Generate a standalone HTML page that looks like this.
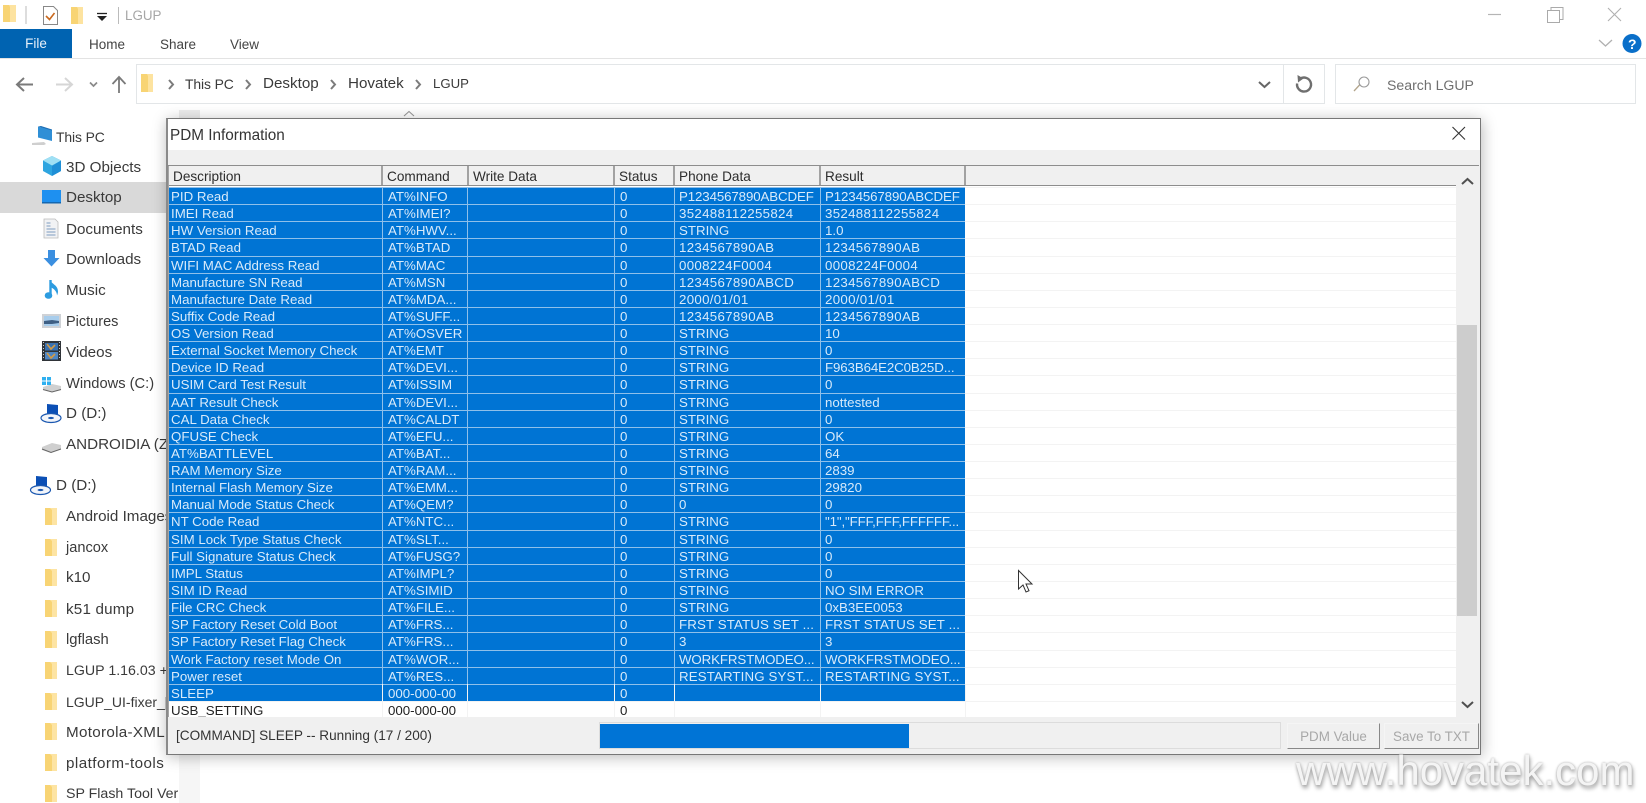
<!DOCTYPE html>
<html><head><meta charset="utf-8"><title>LGUP</title>
<style>
html,body{margin:0;padding:0;background:#fff}
body{width:1646px;height:803px;overflow:hidden;position:relative;font-family:"Liberation Sans",sans-serif;color:#333}
#root{position:absolute;left:0;top:0;width:1646px;height:803px;overflow:hidden;filter:blur(.35px)}
.a{position:absolute;white-space:nowrap}
.n{font-size:15.2px;line-height:20px;color:#3a3a3a}
svg{position:absolute;overflow:visible}
#dlg{left:166px;top:118px;width:1315px;height:637px;background:#f0f0f0;box-sizing:border-box;border:1px solid #777;border-left:2px solid #8a8a8a;box-shadow:1px 2px 14px rgba(0,0,0,.28)}
.r{position:absolute;left:169px;width:1287px;height:18px;box-sizing:border-box;border-top:1px solid #f3f3f3;background:#fff;font-size:13.3px;line-height:17px}
.r div{position:absolute;top:0;white-space:nowrap;height:17px}
.b::before{content:"";position:absolute;left:0;top:-1px;width:796px;height:18px;background:#0074d4;border-top:1px solid #8fc0ea;box-sizing:border-box}
.b{color:#d8eafa}
.k{color:#222}
.r div:nth-child(1){left:2px}
.r div:nth-child(2){left:219px}
.r div:nth-child(3){left:451px}
.r div:nth-child(4){left:510px}
.r div:nth-child(5){left:656px}
.d{letter-spacing:.3px}
.t{letter-spacing:-.12px}
.w{letter-spacing:.12px}
.cl{position:absolute;width:1px;top:187px;height:497px;background:#8fc0ea}
.cw{position:absolute;width:1px;top:684px;height:33px;background:#f3f3f3}
.h{position:absolute;top:168px;font-size:13.6px;line-height:18px;color:#2c2c2c;white-space:nowrap}
.hs{position:absolute;top:166px;width:2px;height:19px;background:#a2a2a2}
</style></head><body><div id="root">

<!-- title bar -->
<svg style="left:0;top:0" width="140" height="30">
<path d="M3 5h13v17H3z" fill="#fde3a0"/><path d="M3 5h6l1 2v15H3z" fill="#f8d474"/>
<path d="M26 6v18" stroke="#bbb"/>
<path d="M43.500 6.500h10l4 4v14h-14z" fill="#fff" stroke="#888"/><path d="M46 16l3.500 3.500 5-6.500" fill="none" stroke="#c9691e" stroke-width="1.600"/>
<path d="M71 7h12v17H71z" fill="#fde3a0"/><path d="M71 7h6l1 2v15h-7z" fill="#f8d474"/>
<path d="M97 13.500h10" stroke="#222" stroke-width="1.300"/><path d="M97 16h10l-5 5z" fill="#222"/>
<path d="M118.500 7v17" stroke="#bbb"/>
</svg>
<div class="a" style="left:125px;top:6px;font-size:13.400px;line-height:20px;color:#a6a6a6">LGUP</div>

<svg style="left:1480px;top:0" width="166" height="60" fill="none">
<path d="M8 14.500h13" stroke="#b5b5b5" stroke-width="1.200"/>
<path d="M67.500 10.500h12v12h-12z" stroke="#aaa"/><path d="M71 10V7.500h12v12h-3.500" stroke="#aaa"/>
<path d="M128 8l13 13M141 8l-13 13" stroke="#b0b0b0" stroke-width="1.100"/>
<path d="M119 40l6.500 6 6.500-6" stroke="#b0b0b0" stroke-width="1.300"/>
<circle cx="152" cy="43.500" r="9.500" fill="#0a6fc9"/>
</svg>
<div class="a" style="left:1628px;top:35px;font-size:14px;font-weight:bold;line-height:18px;color:#fff">?</div>

<!-- ribbon tabs -->
<div class="a" style="left:0;top:29px;width:72px;height:29px;background:#0063b1;color:#e8f1fa;font-size:13.5px;line-height:30px;text-align:center">File</div>
<div class="a" style="left:89px;top:35px;font-size:13.5px;line-height:20px;color:#444">Home</div>
<div class="a" style="left:160px;top:35px;font-size:13.5px;line-height:20px;color:#444">Share</div>
<div class="a" style="left:230px;top:35px;font-size:13.5px;line-height:20px;color:#444">View</div>
<div class="a" style="left:0;top:58px;width:1646px;height:1px;background:#e3e3e3"></div>

<!-- nav row -->
<svg style="left:0;top:60px" width="135" height="45" fill="none">
<path d="M33 24.500H18M24 18l-7 6.500 7 6.500" stroke="#7a7a7a" stroke-width="2"/>
<path d="M56 24.500h15M65 18l7 6.500-7 6.500" stroke="#d6d6d6" stroke-width="2"/>
<path d="M90 22.500l3.500 3.500 3.500-3.500" stroke="#8a8a8a" stroke-width="1.700"/>
<path d="M119 33V18M112.500 24l6.500-7 6.500 7" stroke="#7a7a7a" stroke-width="1.800"/>
</svg>
<div class="a" style="left:136px;top:64px;width:1187px;height:38px;border:1px solid #e3e6e8"></div>
<div class="a" style="left:1283px;top:64px;width:1px;height:39px;background:#e3e6e8"></div>
<div class="a" style="left:1335px;top:64px;width:299px;height:38px;border:1px solid #e3e6e8"></div>
<svg style="left:136px;top:60px" width="300" height="45" fill="none">
<path d="M5 14h12v18H5z" fill="#fde3a0"/><path d="M5 14h6l1 2v16H5z" fill="#f8d474"/>
<path d="M33 20l4 4.500-4 4.500M110 20l4 4.500-4 4.500M195 20l4 4.500-4 4.500M280 20l4 4.500-4 4.500" stroke="#7b7b7b" stroke-width="2"/>
</svg>
<div class="a" style="left:185px;top:74px;font-size:13.900px;letter-spacing:-.1px;line-height:20px;color:#3a3a3a">This PC</div>
<div class="a" style="left:263px;top:74px;font-size:15.2px;line-height:20px;color:#3a3a3a">Desktop</div>
<div class="a" style="left:348px;top:74px;font-size:15.2px;line-height:20px;color:#3a3a3a">Hovatek</div>
<div class="a" style="left:433px;top:74px;font-size:13.2px;line-height:20px;color:#3a3a3a">LGUP</div>
<svg style="left:1250px;top:70px" width="130" height="30" fill="none">
<path d="M9 12l5.500 5 5.500-5" stroke="#666" stroke-width="2"/>
<path d="M50 8.800A7 7 0 1 1 47.100 13.500" stroke="#6f6f6f" stroke-width="2.400"/><path d="M47.500 5l6 3.500-5.500 4z" fill="#6f6f6f"/>
<path d="M104 21l6-6.500" stroke="#b3a58c" stroke-width="1.300"/><circle cx="114" cy="12" r="5" stroke="#9a9a9a" stroke-width="1.100"/>
</svg>
<div class="a" style="left:1387px;top:75px;font-size:14.1px;line-height:20px;color:#6f6f6f">Search LGUP</div>
<svg style="left:400px;top:108px" width="20" height="10" fill="none"><path d="M4 8l5-4.500L14 8" stroke="#999" stroke-width="1.100"/></svg>

<!-- side -->
<div class="a" style="left:0;top:182px;width:179px;height:31px;background:#d9d9d9"></div>
<div class="a" style="left:179px;top:110px;width:21px;height:693px;background:#f6f6f6"></div>
<div class="a" style="left:179px;top:110px;width:21px;height:120px;background:#ededed"></div>

<div class="a n" style="left:56px;top:127px;font-size:13.900px;letter-spacing:-.1px">This PC</div>
<div class="a n" style="left:66px;top:158px">3D Objects</div>
<div class="a n" style="left:66px;top:188px">Desktop</div>
<div class="a n" style="left:66px;top:220px">Documents</div>
<div class="a n" style="left:66px;top:250px">Downloads</div>
<div class="a n" style="left:66px;top:281px">Music</div>
<div class="a n" style="left:66px;top:312px;font-size:14.5px">Pictures</div>
<div class="a n" style="left:66px;top:343px">Videos</div>
<div class="a n" style="left:66px;top:374px;font-size:14.7px">Windows (C:)</div>
<div class="a n" style="left:66px;top:404px">D (D:)</div>
<div class="a n" style="left:66px;top:435px">ANDROIDIA (Z:)</div>
<div class="a n" style="left:56px;top:476px">D (D:)</div>
<div class="a n" style="left:66px;top:507px">Android Images</div>
<div class="a n" style="left:66px;top:538px;font-size:14.6px">jancox</div>
<div class="a n" style="left:66px;top:568px">k10</div>
<div class="a n" style="left:66px;top:600px;letter-spacing:.2px">k51 dump</div>
<div class="a n" style="left:66px;top:630px;font-size:14.8px">lgflash</div>
<div class="a n" style="left:66px;top:661px;font-size:14.2px">LGUP 1.16.03 +</div>
<div class="a n" style="left:66px;top:692px;font-size:14px">LGUP_UI-fixer_[</div>
<div class="a n" style="left:66px;top:723px;letter-spacing:.3px">Motorola-XML</div>
<div class="a n" style="left:66px;top:754px;letter-spacing:.45px">platform-tools</div>
<div class="a n" style="left:66px;top:784px;width:112px;overflow:hidden;font-size:14.2px">SP Flash Tool Ver</div>

<svg style="left:0;top:120px" width="70" height="683">
<!-- This PC -->
<path d="M38 6.500l14 3.500v11l-14-3.500z" fill="#2f8fd6"/><path d="M38 6.500l3-.5 11 3.500-0 1z" fill="#1c6eb5"/>
<path d="M32 23l12-1 2 2-2 1-12 0z" fill="#cfcfcf"/>
<!-- 3D -->
<path d="M52 36l9 4.500v10.500l-9 5-9-5V40.500z" fill="#2ea5e0"/><path d="M52 46v10l9-5V40.500z" fill="#1f8fd6"/><path d="M43 40.500l9-4.500 9 4.500-9 5z" fill="#9fe0f4"/>
<!-- Desktop -->
<rect x="42" y="70" width="19" height="13" fill="#1e90f0"/><rect x="42" y="82" width="19" height="1.500" fill="#1467b0"/>
<!-- Documents -->
<path d="M44 99h11l3 3v16H44z" fill="#f1f2f4" stroke="#bbb" stroke-width=".8"/><path d="M46.500 103h4M46.500 106h4M46.500 109h9M46.500 112h9M46.500 115h9" stroke="#7d9cc0"/>
<!-- Downloads -->
<path d="M48 130h7v8h4.500L51.500 146.500 43.500 138H48z" fill="#3b8fe0"/>
<!-- Music -->
<path d="M50.500 160v15" stroke="#2d9ce0" stroke-width="2.400"/><ellipse cx="48.500" cy="175.500" rx="3.800" ry="3.300" fill="#2d9ce0"/><path d="M50 160c1.500 4 8 5 8 11.500 0 2-1 4-1 4 0-4-3-7-7-8.500z" fill="#2d9ce0"/>
<!-- Pictures -->
<rect x="42" y="194" width="19" height="14" fill="#cfd2d6"/><rect x="44" y="196" width="15" height="10" fill="#a8cdec"/><path d="M44 201l8-1 7 1v2l-7 1-8 0z" fill="#3e5f84"/>
<!-- Videos -->
<rect x="42" y="221" width="19" height="20" fill="#2f3338"/><rect x="45" y="223" width="13" height="7.500" fill="#3a71b0"/><rect x="45" y="232" width="13" height="7.500" fill="#4f86c3"/><path d="M47 224l4 5 4-4M47 233l4 5 4-4" stroke="#d49a44" stroke-width="1.600" fill="none"/><path d="M43.500 222v18M59.500 222v18" stroke="#c9c9c9" stroke-dasharray="1 2"/>
<!-- Windows C -->
<path d="M43 267l9-3 9 2v4l-9 2-9-2z" fill="#d0d0d0"/><path d="M43 269.500l9 2.500 9-2.500" stroke="#666" fill="none"/><rect x="42" y="257" width="4" height="3.500" fill="#2fb0f0"/><rect x="47" y="257" width="4" height="3.500" fill="#2fb0f0"/><rect x="42" y="261.500" width="4" height="3.500" fill="#2fb0f0"/><rect x="47" y="261.500" width="4" height="3.500" fill="#2fb0f0"/>
<!-- D -->
<path d="M47 284l11 1v9l-3 3H47z" fill="#0b4fb5"/><ellipse cx="51" cy="298" rx="10" ry="4.500" fill="#f2f5fa" stroke="#1b58b0" stroke-width="1.200"/><ellipse cx="51" cy="298" rx="3" ry="1.100" fill="#1b58b0"/>
<!-- Androidia -->
<path d="M42 327l10-4 9 2v4l-10 4-9-3z" fill="#cfcfcf"/><path d="M42 329l9 3.500 10-3.500" stroke="#666" fill="none"/>
<!-- D top -->
<path d="M36 356l11 1v9l-3 3h-8z" fill="#0b4fb5"/><ellipse cx="40.500" cy="370" rx="10" ry="4.500" fill="#f2f5fa" stroke="#1b58b0" stroke-width="1.200"/><ellipse cx="40.500" cy="370" rx="3" ry="1.100" fill="#1b58b0"/>
<!-- folders -->
<g fill="#fde4a3"><path d="M45 388h12v17H45zM45 419h12v17H45zM45 449h12v17H45zM45 480h12v17H45zM45 511h12v17H45zM45 542h12v17H45zM45 573h12v17H45zM45 603h12v17H45zM45 634h12v17H45zM45 665h12v17H45z"/></g>
<g fill="#f8d474"><path d="M45 388h5l2 2v15h-7zM45 419h5l2 2v15h-7zM45 449h5l2 2v15h-7zM45 480h5l2 2v15h-7zM45 511h5l2 2v15h-7zM45 542h5l2 2v15h-7zM45 573h5l2 2v15h-7zM45 603h5l2 2v15h-7zM45 634h5l2 2v15h-7zM45 665h5l2 2v15h-7z"/></g>
</svg>

<!-- dialog -->
<div class="a" id="dlg"></div>
<div class="a" style="left:168px;top:119px;width:1312px;height:31px;background:#fff"></div>
<div class="a" style="left:170px;top:126px;font-size:15.3px;line-height:20px;color:#333">PDM Information</div>
<svg style="left:1450px;top:125px" width="24" height="20" fill="none"><path d="M2.500 2l12.500 12.500M15 2L2.500 14.500" stroke="#333" stroke-width="1.100"/></svg>

<div class="a" style="left:168px;top:165px;width:1311px;height:552px;background:#f0f0f0"></div>
<div class="a" style="left:168px;top:165px;width:1311px;height:1px;background:#8d8d8d"></div>
<div class="a" style="left:168px;top:185px;width:1288px;height:1.500px;background:#8d8d8d"></div>
<div class="a" style="left:168px;top:186px;width:1288px;height:531px;background:#fff"></div>
<div class="a" style="left:168px;top:166px;width:1px;height:551px;background:#a5a5a5"></div>

<div class="h" style="left:173px">Description</div>
<div class="h" style="left:387px">Command</div>
<div class="h" style="left:473px">Write Data</div>
<div class="h" style="left:619px">Status</div>
<div class="h" style="left:679px">Phone Data</div>
<div class="h" style="left:825px">Result</div>
<div class="hs" style="left:381px"></div><div class="hs" style="left:467px"></div><div class="hs" style="left:613px"></div><div class="hs" style="left:673px"></div><div class="hs" style="left:819px"></div><div class="hs" style="left:964px"></div>

<!-- rows -->
<div class="a" style="left:0;top:0;width:1646px;height:717px;overflow:hidden;white-space:normal">
<div class="r b" style="top:187px"><div>PID Read</div><div>AT%INFO</div><div>0</div><div class="t">P1234567890ABCDEF</div><div class="t">P1234567890ABCDEF</div></div>
<div class="r b" style="top:204px"><div>IMEI Read</div><div>AT%IMEI?</div><div>0</div><div class="d">352488112255824</div><div class="d">352488112255824</div></div>
<div class="r b" style="top:221px"><div>HW Version Read</div><div>AT%HWV...</div><div>0</div><div>STRING</div><div>1.0</div></div>
<div class="r b" style="top:238px"><div>BTAD Read</div><div>AT%BTAD</div><div>0</div><div class="d">1234567890AB</div><div class="d">1234567890AB</div></div>
<div class="r b" style="top:256px"><div>WIFI MAC Address Read</div><div>AT%MAC</div><div>0</div><div class="d">0008224F0004</div><div class="d">0008224F0004</div></div>
<div class="r b" style="top:273px"><div>Manufacture SN Read</div><div>AT%MSN</div><div>0</div><div class="d">1234567890ABCD</div><div class="d">1234567890ABCD</div></div>
<div class="r b" style="top:290px"><div>Manufacture Date Read</div><div>AT%MDA...</div><div>0</div><div class="d">2000/01/01</div><div class="d">2000/01/01</div></div>
<div class="r b" style="top:307px"><div>Suffix Code Read</div><div>AT%SUFF...</div><div>0</div><div class="d">1234567890AB</div><div class="d">1234567890AB</div></div>
<div class="r b" style="top:324px"><div>OS Version Read</div><div>AT%OSVER</div><div>0</div><div>STRING</div><div>10</div></div>
<div class="r b" style="top:341px"><div>External Socket Memory Check</div><div>AT%EMT</div><div>0</div><div>STRING</div><div>0</div></div>
<div class="r b" style="top:358px"><div>Device ID Read</div><div>AT%DEVI...</div><div>0</div><div>STRING</div><div class="t">F963B64E2C0B25D...</div></div>
<div class="r b" style="top:375px"><div>USIM Card Test Result</div><div>AT%ISSIM</div><div>0</div><div>STRING</div><div>0</div></div>
<div class="r b" style="top:393px"><div>AAT Result Check</div><div>AT%DEVI...</div><div>0</div><div>STRING</div><div>nottested</div></div>
<div class="r b" style="top:410px"><div>CAL Data Check</div><div>AT%CALDT</div><div>0</div><div>STRING</div><div>0</div></div>
<div class="r b" style="top:427px"><div>QFUSE Check</div><div>AT%EFU...</div><div>0</div><div>STRING</div><div>OK</div></div>
<div class="r b" style="top:444px"><div>AT%BATTLEVEL</div><div>AT%BAT...</div><div>0</div><div>STRING</div><div>64</div></div>
<div class="r b" style="top:461px"><div>RAM Memory Size</div><div>AT%RAM...</div><div>0</div><div>STRING</div><div>2839</div></div>
<div class="r b" style="top:478px"><div>Internal Flash Memory Size</div><div>AT%EMM...</div><div>0</div><div>STRING</div><div>29820</div></div>
<div class="r b" style="top:495px"><div>Manual Mode Status Check</div><div>AT%QEM?</div><div>0</div><div>0</div><div>0</div></div>
<div class="r b" style="top:512px"><div>NT Code Read</div><div>AT%NTC...</div><div>0</div><div>STRING</div><div class="t">"1","FFF,FFF,FFFFFF...</div></div>
<div class="r b" style="top:530px"><div>SIM Lock Type Status Check</div><div>AT%SLT...</div><div>0</div><div>STRING</div><div>0</div></div>
<div class="r b" style="top:547px"><div>Full Signature Status Check</div><div>AT%FUSG?</div><div>0</div><div>STRING</div><div>0</div></div>
<div class="r b" style="top:564px"><div>IMPL Status</div><div>AT%IMPL?</div><div>0</div><div>STRING</div><div>0</div></div>
<div class="r b" style="top:581px"><div>SIM ID Read</div><div>AT%SIMID</div><div>0</div><div>STRING</div><div>NO SIM ERROR</div></div>
<div class="r b" style="top:598px"><div>File CRC Check</div><div>AT%FILE...</div><div>0</div><div>STRING</div><div>0xB3EE0053</div></div>
<div class="r b" style="top:615px"><div>SP Factory Reset Cold Boot</div><div>AT%FRS...</div><div>0</div><div class="w">FRST STATUS SET ...</div><div class="w">FRST STATUS SET ...</div></div>
<div class="r b" style="top:632px"><div>SP Factory Reset Flag Check</div><div>AT%FRS...</div><div>0</div><div>3</div><div>3</div></div>
<div class="r b" style="top:650px"><div>Work Factory reset Mode On</div><div>AT%WOR...</div><div>0</div><div class="t">WORKFRSTMODEO...</div><div class="t">WORKFRSTMODEO...</div></div>
<div class="r b" style="top:667px"><div>Power reset</div><div>AT%RES...</div><div>0</div><div class="w">RESTARTING SYST...</div><div class="w">RESTARTING SYST...</div></div>
<div class="r b" style="top:684px"><div>SLEEP</div><div>000-000-00</div><div>0</div><div></div><div></div></div>
<div class="r k" style="top:701px"><div>USB_SETTING</div><div>000-000-00</div><div>0</div><div></div><div></div></div>
<div class="cl" style="left:382px"></div><div class="cl" style="left:467px"></div><div class="cl" style="left:614px"></div><div class="cl" style="left:674px"></div><div class="cl" style="left:820px"></div>
<div class="cw" style="left:382px"></div><div class="cw" style="left:467px"></div><div class="cw" style="left:614px"></div><div class="cw" style="left:674px"></div><div class="cw" style="left:820px"></div><div class="cw" style="left:965px"></div>
</div>
<div class="a" style="left:1456px;top:166px;width:23px;height:551px;background:#f0f0f0"></div>

<!-- scrollbar -->
<div class="a" style="left:1457px;top:325px;width:20px;height:291px;background:#cdcdcd"></div>
<svg style="left:1456px;top:170px" width="24" height="545" fill="none">
<path d="M6 14l5.500-5 5.500 5" stroke="#505050" stroke-width="2"/>
<path d="M6 532l5.500 5 5.500-5" stroke="#505050" stroke-width="2"/>
</svg>

<!-- bottom -->
<div class="a" style="left:176px;top:726px;font-size:13.6px;line-height:20px;color:#333">[COMMAND] SLEEP -- Running (17 / 200)</div>
<div class="a" style="left:599px;top:722px;width:682px;height:27px;box-sizing:border-box;border:1px solid #dcdcdc;background:#f0f0f0"></div>
<div class="a" style="left:600px;top:724px;width:309px;height:24px;background:#0074d6"></div>
<div class="a" style="left:1287px;top:723px;width:93px;height:26px;box-sizing:border-box;border:1px solid #f5f5f5;border-right:1px solid #888;border-bottom:1px solid #888;background:#f0f0f0;color:#a8a8a8;font-size:13.4px;line-height:25px;text-align:center">PDM Value</div>
<div class="a" style="left:1384px;top:723px;width:95px;height:26px;box-sizing:border-box;border:1px solid #f5f5f5;border-right:1px solid #888;border-bottom:1px solid #888;background:#f0f0f0;color:#a8a8a8;font-size:13.4px;line-height:25px;text-align:center">Save To TXT</div>

<!-- cursor -->
<svg style="left:1016px;top:568px" width="22" height="28"><path d="M2.500 2.500v18.500l4.500-4 3 7 3-1.300-3-6.700h6z" fill="#fff" stroke="#333" stroke-width="1"/></svg>

<!-- watermark -->
<div class="a" style="left:1296px;top:748px;font-size:42px;line-height:46px;color:#f4f4f4;text-shadow:0 0 2px #aaa,1px 3px 4px #999">www.hovatek.com</div>
</div></body></html>
